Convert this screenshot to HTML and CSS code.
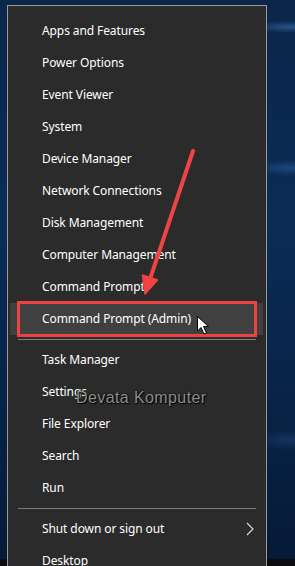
FILE: index.html
```html
<!DOCTYPE html>
<html lang="en">
  <head>
    <meta charset="UTF-8" />
    <meta name="viewport" content="width=device-width, initial-scale=1.0" />
    <title>Quick Link Menu</title>
    <link rel="stylesheet" href="styles.css">
  </head>
  <body>
    <div class="menu">
      <div class="item">Apps and Features</div>
      <div class="item">Power Options</div>
      <div class="item">Event Viewer</div>
      <div class="item">System</div>
      <div class="item">Device Manager</div>
      <div class="item">Network Connections</div>
      <div class="item">Disk Management</div>
      <div class="item">Computer Management</div>
      <div class="item">Command Prompt</div>
      <div class="item active">Command Prompt (Admin)</div>
      <div class="sep"></div>
      <div class="item">Task Manager</div>
      <div class="item">Settings</div>
      <div class="item">File Explorer</div>
      <div class="item">Search</div>
      <div class="item">Run</div>
      <div class="sep"></div>
      <div class="item has-sub">
        Shut down or sign out
        <svg class="chevron" width="8" height="14" viewBox="0 0 8 14">
          <polyline points="1,1 7,7 1,13" fill="none" stroke="#d8d8d8" stroke-width="1.2" />
        </svg>
      </div>
      <div class="item">Desktop</div>
    </div>

    <div class="watermark">Devata Komputer</div>

    <!-- annotation arrow + mouse pointer -->
    <svg class="overlay" width="295" height="566" viewBox="0 0 295 566">
      <line x1="193" y1="151" x2="150" y2="279" stroke="#ef4444" stroke-width="4" stroke-linecap="round" />
      <polygon points="145,294 142.5,275 157.5,280" fill="#ef4444" stroke="#ef4444" stroke-width="1.5" stroke-linejoin="round" />
      <path d="M197.5 316.5 L197.5 331 L201 327.5 L204 334 L206.5 333 L203.5 326.5 L208.5 326.5 Z"
        fill="#fff" stroke="#000" stroke-width="1" stroke-linejoin="round" />
    </svg>
  </body>
</html>
```

FILE: styles.css
```css
html {
  overflow: hidden;
}

body {
  margin: 0;
  height: 566px;
  overflow: hidden;
  position: relative;
  font-family: "Noto Sans", "Open Sans", sans-serif;
  background:
    linear-gradient(to bottom, transparent 559px, #0c0c10 559px),
    radial-gradient(ellipse 40px 6px at 290px 27px, rgba(60, 120, 190, 0.55), transparent),
    radial-gradient(ellipse 40px 8px at 290px 168px, rgba(50, 105, 170, 0.45), transparent),
    radial-gradient(ellipse 40px 10px at 290px 440px, rgba(40, 90, 150, 0.35), transparent),
    linear-gradient(to bottom, #0b2649 0%, #0a2c57 40%, #082347 70%, #061a36 100%);
}

.menu {
  margin: 5px 0 0 7px;
  width: 258px;
  height: 561px;
  overflow: hidden;
  padding-top: 9px;
  box-sizing: border-box;
  background-color: #2b2b2b;
  border: 1px solid #9a9a9a;
  border-bottom: none;
  width: 260px;
}

.item {
  position: relative;
  height: 32px;
  line-height: 32px;
  margin: 0 3px 0 2px;
  padding-left: 32px;
  color: #ffffff;
  font-size: 12px;
  letter-spacing: -0.1px;
  white-space: nowrap;
}

.item.active {
  background-color: #404040;
}

/* red annotation box round the selected row */
.item.active::after {
  content: "";
  position: absolute;
  left: 7px;
  top: -2px;
  width: 234px;
  height: 30px;
  border: 3px solid #ee4242;
}

.sep {
  height: 1px;
  margin: 4px 10px;
  background-color: #7d7d7d;
}

.chevron {
  position: absolute;
  right: 9px;
  top: 9px;
}

.watermark {
  position: absolute;
  left: 76px;
  top: 389px;
  color: #8c8c8c;
  font-family: "Liberation Sans", Arial, sans-serif;
  font-size: 16px;
  letter-spacing: 0.4px;
  text-shadow: 0 0 2px #000, 1px 1px 1px #000;
}

.overlay {
  position: absolute;
  left: 0;
  top: 0;
}
```
